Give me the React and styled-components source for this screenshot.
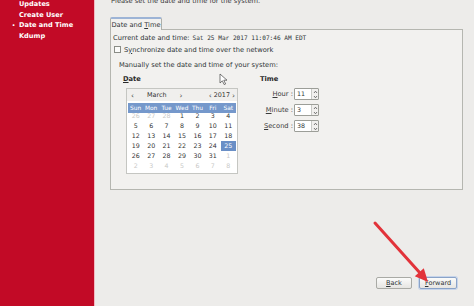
import React from "react"
import styled, { createGlobalStyle } from "styled-components"

const GlobalStyle = createGlobalStyle`
  html, body { margin: 0; padding: 0; }
  body {
    width: 474px;
    height: 306px;
    overflow: hidden;
    font-family: "DejaVu Sans", sans-serif;
    background: #edecea;
  }
`

const Screen = styled.div`
  display: flex;
  width: 474px;
  height: 306px;
  overflow: hidden;
`

const Sidebar = styled.nav`
  width: 94px;
  flex: none;
  background: #c20a26;
  border-right: 1px solid #f1b9c1;
  display: flex;
  flex-direction: column;
`

const NavItem = styled.div`
  position: relative;
  height: 10.4px;
  line-height: 10.4px;
  padding-left: 19px;
  color: #fff;
  font-size: 6.6px;
  font-weight: bold;
  white-space: nowrap;
  &:first-child { margin-top: -0.6px; }
`

const Bullet = styled.span`
  position: absolute;
  left: 12px;
  font-size: 5px;
`

const Main = styled.div`
  position: relative;
  flex: 1;
  display: flex;
  flex-direction: column;
  padding: 0 11px 0 15px;
  color: #2e3436;
  font-size: 6.7px;
`

const Intro = styled.div`
  margin-top: -3px;
  height: 8px;
  line-height: 8px;
  padding-left: 1px;
  color: #3a3a3a;
  white-space: nowrap;
`

const TabStrip = styled.div`
  display: flex;
  margin-top: 12px;
`

const Tab = styled.div`
  width: 52px;
  height: 13px;
  box-sizing: border-box;
  line-height: 12px;
  text-align: center;
  background: #f2f1ef;
  border: 1px solid #aeb0aa;
  border-top: 2px solid #9db4d6;
  border-bottom: none;
  border-radius: 2px 2px 0 0;
  white-space: nowrap;
  margin-bottom: -1px;
  position: relative;
  z-index: 1;
`

const Panel = styled.div`
  height: 161px;
  box-sizing: border-box;
  background: #f2f1ef;
  border: 1px solid #b5b6b0;
  padding: 2px 2px 0 2px;
`

const Line = styled.div`
  display: flex;
  align-items: center;
  height: 9px;
  margin-top: ${p => p.$mt || 0}px;
  padding-left: ${p => p.$indent || 0}px;
  white-space: nowrap;
`

const Mono = styled.span`
  font-family: "DejaVu Sans Mono", monospace;
  font-size: 6.1px;
  margin-left: 3px;
`

const Check = styled.span`
  width: 5px;
  height: 5px;
  border: 1px solid #8a8c86;
  background: #fbfbfa;
  margin: 0 3px 0 1px;
`

const U = styled.span`
  text-decoration: underline;
  text-underline-offset: 1px;
`

const Columns = styled.div`
  display: flex;
  margin-top: 6px;
  padding-left: 10px;
`

const DateCol = styled.div`
  width: 137px;
`

const Heading = styled.div`
  font-weight: bold;
  height: 9px;
  line-height: 9px;
  color: #2a2a2a;
`

const Calendar = styled.div`
  margin: 4px 0 0 3px;
  width: 112px;
  height: 86px;
  box-sizing: border-box;
  background: #fff;
  border: 1px solid #c5c6c2;
  padding: 0 1px;
`

const CalHead = styled.div`
  display: flex;
  justify-content: space-between;
  align-items: center;
  height: 12px;
  margin: 0 -1px;
  padding: 0 2px;
  background: #f0efed;
  font-size: 6.4px;
  color: #333;
`

const Nav = styled.div`
  display: flex;
  align-items: center;
  gap: ${p => p.$gap}px;
  padding-left: ${p => p.$pl || 0}px;
`

const Chevron = styled.span`
  font-size: 7.5px;
  color: #444;
`

const Grid = styled.div`
  display: grid;
  grid-template-columns: repeat(7, 1fr);
  grid-auto-rows: 10px;
`

const DayName = styled.div`
  background: #7598cb;
  color: #fff;
  font-size: 5.9px;
  text-align: center;
  line-height: 10px;
  height: 10px;
  margin-top: 2px;
`

const Day = styled.div`
  text-align: center;
  font-size: 6.3px;
  line-height: 10px;
  color: ${p => (p.$sel ? "#fff" : p.$dim ? "#c9c9c7" : "#333")};
  background: ${p => (p.$sel ? "#6a8fc6" : "transparent")};
`

const TimeCol = styled.div`
  display: flex;
  flex-direction: column;
`

const TimeRows = styled.div`
  display: grid;
  grid-template-columns: 33px 25px;
  column-gap: 1px;
  row-gap: 4px;
  margin-top: 4px;
  align-items: center;
`

const TimeLabel = styled.div`
  text-align: right;
  white-space: nowrap;
  color: #3a3a3a;
`

const Spin = styled.div`
  display: flex;
  width: 25px;
  height: 12px;
  box-sizing: border-box;
  border: 1px solid #9c9e98;
  background: #fff;
  border-radius: 1px;
`

const SpinText = styled.div`
  flex: 1;
  line-height: 10px;
  padding-left: 2px;
  font-size: 6.3px;
`

const SpinBtn = styled.div`
  width: 6px;
  border-left: 1px solid #c9cac6;
  background: #f1f0ee;
  display: flex;
  flex-direction: column;
  align-items: center;
  justify-content: space-around;
`

const Spacer = styled.div`
  flex: 1;
`

const Buttons = styled.div`
  display: flex;
  justify-content: flex-end;
  gap: 7px;
  margin: 0 6px 17px 0;
`

const Button = styled.div`
  width: ${p => p.$w}px;
  height: 12px;
  box-sizing: border-box;
  line-height: 10px;
  text-align: center;
  border: 1px solid ${p => (p.$focus ? "#8aa3c8" : "#a9aaa5")};
  border-radius: 2px;
  background: linear-gradient(#fbfbfa, #e6e5e2);
  color: #2e3436;
  font-size: 6.5px;
  box-shadow: ${p => (p.$focus ? "0 0 0 1px #c6d4ea" : "none")};
`

const Overlay = styled.svg`
  position: absolute;
  left: 0;
  top: 0;
  pointer-events: none;
`

const weeks = [
  [26, 27, 28, 1, 2, 3, 4],
  [5, 6, 7, 8, 9, 10, 11],
  [12, 13, 14, 15, 16, 17, 18],
  [19, 20, 21, 22, 23, 24, 25],
  [26, 27, 28, 29, 30, 31, 1],
  [2, 3, 4, 5, 6, 7, 8],
]

const ArrowUp = () => (
  <svg width="5" height="4" viewBox="0 0 5 4">
    <path d="M1 3 L2.5 1.2 L4 3" fill="none" stroke="#555" strokeWidth="0.8" />
  </svg>
)
const ArrowDown = () => (
  <svg width="5" height="4" viewBox="0 0 5 4">
    <path d="M1 1 L2.5 2.8 L4 1" fill="none" stroke="#555" strokeWidth="0.8" />
  </svg>
)

const SpinBox = ({ value }) => (
  <Spin>
    <SpinText>{value}</SpinText>
    <SpinBtn>
      <ArrowUp />
      <ArrowDown />
    </SpinBtn>
  </Spin>
)

export default function App() {
  return (
    <Screen>
      <GlobalStyle />
      <Sidebar>
        <NavItem>Updates</NavItem>
        <NavItem>Create User</NavItem>
        <NavItem><Bullet>•</Bullet>Date and Time</NavItem>
        <NavItem>Kdump</NavItem>
      </Sidebar>
      <Main>
        <Intro>Please set the date and time for the system.</Intro>
        <TabStrip>
          <Tab>Date and <U>T</U>ime</Tab>
        </TabStrip>
        <Panel>
          <Line $mt={1}>
            Current date and time:<Mono>Sat 25 Mar 2017 11:07:46 AM EDT</Mono>
          </Line>
          <Line $mt={3}>
            <Check />S<U>y</U>nchronize date and time over the network
          </Line>
          <Line $mt={6} $indent={6}>Manually set the date and time of your system:</Line>
          <Columns>
            <DateCol>
              <Heading><U>D</U>ate</Heading>
              <Calendar>
                <CalHead>
                  <Nav $gap={13} $pl={2}><Chevron>‹</Chevron><span>March</span><Chevron>›</Chevron></Nav>
                  <Nav $gap={2}><Chevron>‹</Chevron><span>2017</span><Chevron>›</Chevron></Nav>
                </CalHead>
                <Grid>
                  {["Sun", "Mon", "Tue", "Wed", "Thu", "Fri", "Sat"].map(d => (
                    <DayName key={d}>{d}</DayName>
                  ))}
                  {weeks.map((w, wi) =>
                    w.map((d, di) => (
                      <Day
                        key={wi + "-" + di}
                        $dim={(wi === 0 && d > 20) || (wi >= 4 && d < 10)}
                        $sel={wi === 3 && d === 25}
                      >
                        {d}
                      </Day>
                    ))
                  )}
                </Grid>
              </Calendar>
            </DateCol>
            <TimeCol>
              <Heading>Time</Heading>
              <TimeRows>
                <TimeLabel><U>H</U>our :</TimeLabel>
                <SpinBox value="11" />
                <TimeLabel><U>M</U>inute :</TimeLabel>
                <SpinBox value="3" />
                <TimeLabel><U>S</U>econd :</TimeLabel>
                <SpinBox value="38" />
              </TimeRows>
            </TimeCol>
          </Columns>
        </Panel>
        <Spacer />
        <Buttons>
          <Button $w={36}><U>B</U>ack</Button>
          <Button $w={38} $focus><U>F</U>orward</Button>
        </Buttons>
        <Overlay width="379" height="306" viewBox="95 0 379 306">
          <path
            d="M220 74 L220 83 L222.3 80.8 L224.2 84.6 L225.6 84 L223.8 80.2 L227 80.2 Z"
            fill="#fff"
            stroke="#444"
            strokeWidth="0.7"
          />
          <line x1="375" y1="223" x2="420" y2="273" stroke="#e2333a" strokeWidth="3" strokeLinecap="round" />
          <path d="M428 282 L414.8 276.3 L423.8 268.3 Z" fill="#e2333a" />
        </Overlay>
      </Main>
    </Screen>
  )
}
